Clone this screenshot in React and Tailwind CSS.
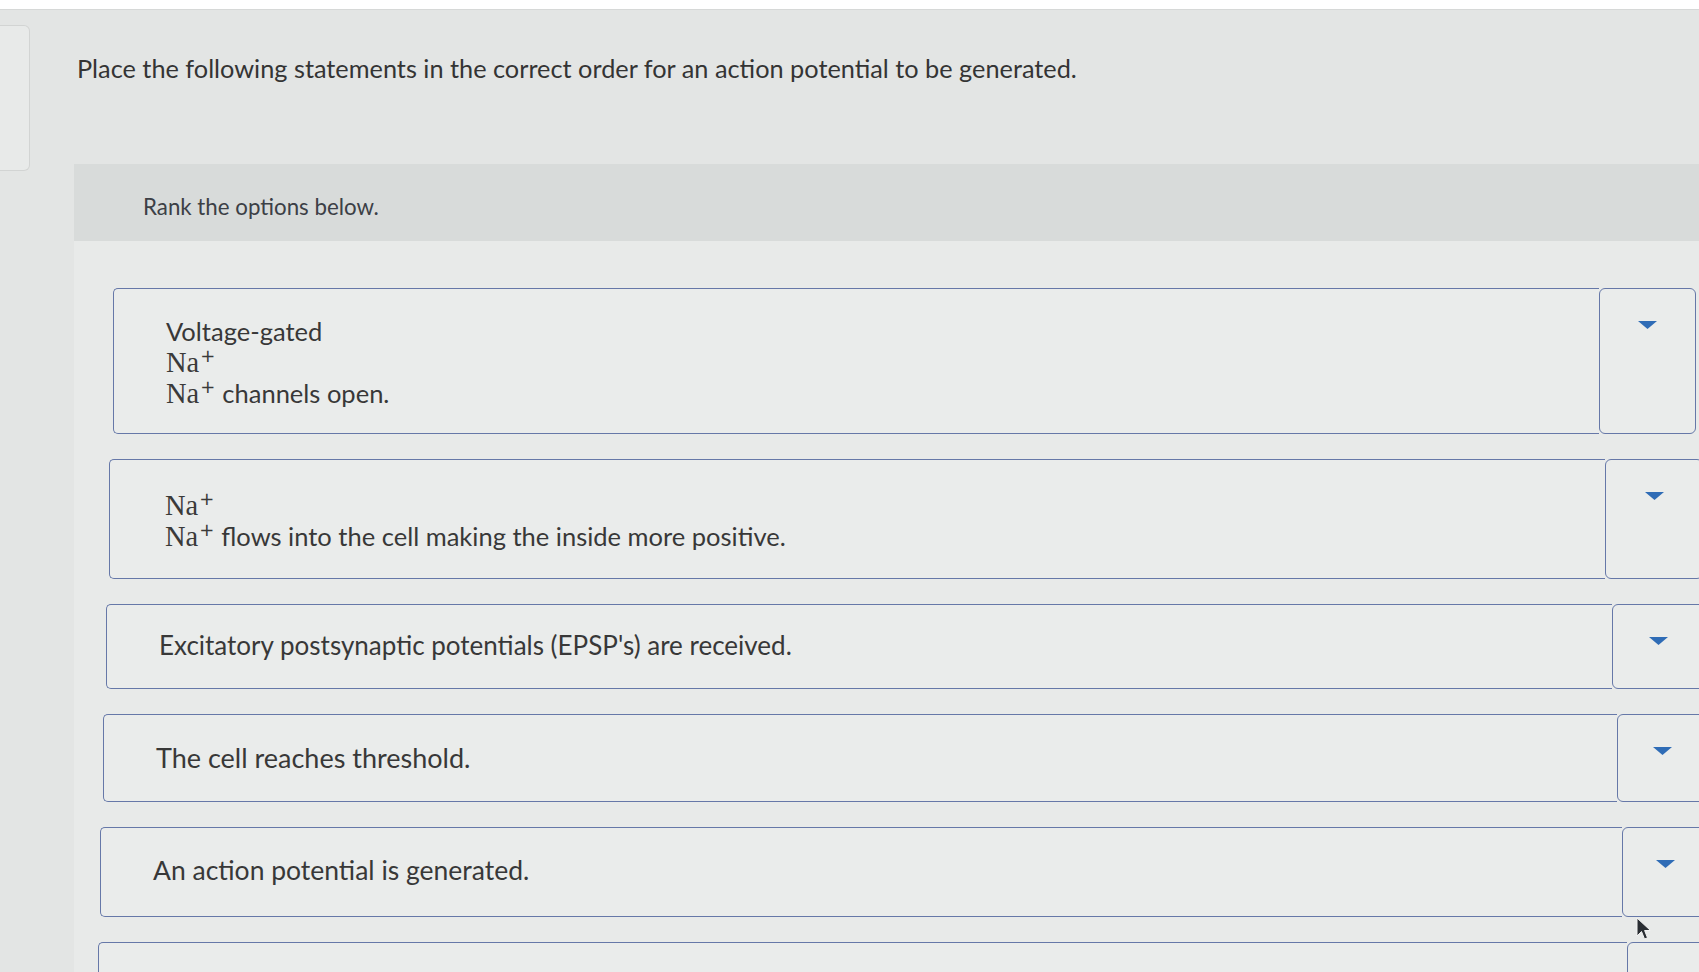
import React from 'react';

const Caret = () => (
    <svg width="19" height="8" viewBox="0 0 19 8" className="block">
        <path d="M0 0 H19 L9.5 8 Z" fill="#2f6cb6" />
    </svg>
);

const Na = () => (
    <span className="font-['Liberation_Serif',serif] text-[28.5px] text-[#3a3a3a] mr-[7px]">
        Na<span className="relative -top-[10px] font-['DejaVu_Sans',sans-serif] text-[18px] leading-none ml-[1px]">+</span>
    </span>
);

const rows = [
    {
        key: 'voltage',
        wrap: 'ml-[39px] mr-[3px] h-[146px]',
        body: 'pl-[52px] pt-[27px] text-[25.5px]',
        drop: 'w-[97px]',
        content: (
            <>
                <div className="leading-[31px]">Voltage-gated</div>
                <div className="leading-[31px]"><Na /></div>
                <div className="leading-[31px]"><Na />channels open.</div>
            </>
        ),
    },
    {
        key: 'flows',
        wrap: 'ml-[35px] -mr-[4px] h-[120px]',
        body: 'pl-[55px] pt-[30px] text-[25.5px]',
        drop: 'w-[98px]',
        content: (
            <>
                <div className="leading-[31px]"><Na /></div>
                <div className="leading-[31px]"><Na />flows into the cell making the inside more positive.</div>
            </>
        ),
    },
    {
        key: 'epsp',
        wrap: 'ml-[32px] -mr-[6px] h-[85px]',
        body: 'pl-[52px] pt-[25px] text-[26px]',
        drop: 'w-[93px]',
        content: <div className="leading-[31px]">Excitatory postsynaptic potentials (EPSP's) are received.</div>,
    },
    {
        key: 'threshold',
        wrap: 'ml-[29px] -mr-[8px] h-[88px]',
        body: 'pl-[52px] pt-[27px] text-[27px]',
        drop: 'w-[90px]',
        content: <div className="leading-[31px]">The cell reaches threshold.</div>,
    },
    {
        key: 'generated',
        wrap: 'ml-[26px] -mr-[10px] h-[90px]',
        body: 'pl-[52px] pt-[27px] text-[26.5px]',
        drop: 'w-[87px]',
        content: <div className="leading-[31px]">An action potential is generated.</div>,
    },
    {
        key: 'next',
        wrap: 'ml-[24px] -mr-[12px] h-[90px]',
        body: 'pl-[52px] pt-[28px] text-[26.5px]',
        drop: 'w-[84px]',
        content: null,
    },
];

const RankRow = ({ row }) => (
    <div className={`flex ${row.wrap}`}>
        <div className={`flex-1 bg-[#eaeceb] border-[1.5px] border-r-0 border-[#6678a8] rounded-l-[5px] text-[#383838] ${row.body}`}>
            {row.content}
        </div>
        <div className={`${row.drop} shrink-0 bg-[#eaeceb] border-[1.5px] border-[#6678a8] rounded-[6px] flex justify-center pt-[32px]`}>
            <Caret />
        </div>
    </div>
);

export default function App() {
    return (
        <div className="relative min-h-screen h-[972px] w-full overflow-hidden bg-[#e3e5e4] font-['Lato',sans-serif] border-t border-[#d6d8d7] mt-[9px]">
            <div className="flex -mt-[9px]">
                {/* left rail */}
                <div className="w-[74px] shrink-0">
                    <div className="mt-[24px] w-[30px] h-[146px] bg-[#e8eae9] border border-l-0 border-[#d2d4d3] rounded-r-[6px]" />
                </div>

                <div className="flex-1 min-w-0">
                    <h1 className="pt-[52px] pl-[3px] text-[25.3px] leading-[30px] text-[#343434]">
                        Place the following statements in the correct order for an action potential to be generated.
                    </h1>

                    <div className="mt-[81px] h-[77px] bg-[#d8dbda] pl-[69px] pt-[30px]">
                        <p className="text-[22.3px] leading-[26px] text-[#3c4046]">Rank the options below.</p>
                    </div>

                    <div className="bg-[#e8eae9] pt-[47px] flex flex-col gap-[25px]">
                        {rows.map((row) => (
                            <RankRow key={row.key} row={row} />
                        ))}
                    </div>
                </div>
            </div>

            {/* mouse pointer */}
            <svg className="absolute left-[1636px] top-[907px]" width="16" height="24" viewBox="0 0 16 24">
                <path d="M1 1 L1 19 L5.5 14.5 L8.5 22 L11.5 20.8 L8.6 13.5 L14.5 13.5 Z" fill="#2a2e33" stroke="#f2f2f2" strokeWidth="1" />
            </svg>
        </div>
    );
}
